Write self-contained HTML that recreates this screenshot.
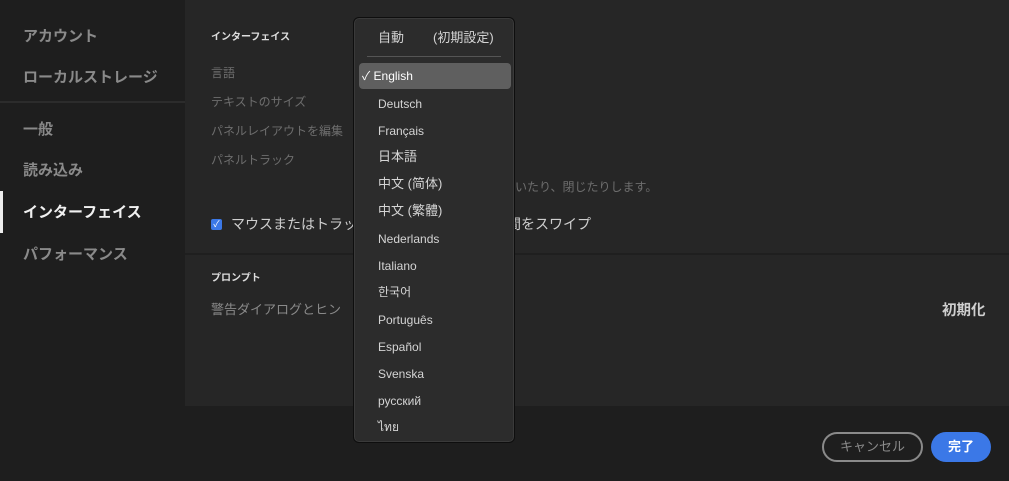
<!DOCTYPE html>
<html><head><meta charset="utf-8"><style>
*{margin:0;padding:0;box-sizing:border-box}
body{width:1009px;height:481px;background:#1e1e1e;font-family:"Liberation Sans","Noto Sans CJK JP",sans-serif;position:relative;overflow:hidden;color:#ccc}
.a{position:absolute;white-space:nowrap;line-height:1.2}
.side{font-size:15px;font-weight:bold;color:#8a8a8a;left:23px}
.panel{position:absolute;left:185px;top:0;width:824px;height:406px;background:#262626}
.lbl{font-size:12px;color:#6e6e6e;left:211px}
.menu{position:absolute;left:353px;top:17px;width:162px;height:426px;background:#2c2c2c;border:1px solid #0e0e0e;border-radius:6px;box-shadow:0 0 0 1px #3a3a3a inset}
.mi{position:absolute;left:24px;font-size:12px;color:#d4d4d4;line-height:16px;white-space:nowrap}
</style></head><body>
<div class="panel"></div>
<div class="a side" style="top:28px">アカウント</div>
<div class="a side" style="top:69px">ローカルストレージ</div>
<div class="a" style="left:0;top:101px;width:185px;height:2px;background:#2c2c2c"></div>
<div class="a side" style="top:121px">一般</div>
<div class="a side" style="top:162px">読み込み</div>
<div class="a side" style="top:204px;color:#f0f0f0">インターフェイス</div>
<div class="a" style="left:0;top:191px;width:3px;height:42px;background:#eee"></div>
<div class="a side" style="top:246px">パフォーマンス</div>

<div class="a" style="left:211px;top:32px;font-size:10px;font-weight:bold;color:#ddd">インターフェイス</div>
<div class="a lbl" style="top:66px">言語</div>
<div class="a lbl" style="top:95px">テキストのサイズ</div>
<div class="a lbl" style="top:124px">パネルレイアウトを編集</div>
<div class="a lbl" style="top:153px">パネルトラック</div>
<div class="a" style="left:515px;top:180px;font-size:12px;color:#6e6e6e">いたり、閉じたりします。</div>
<div class="a" style="left:211px;top:219px;width:11px;height:11px;background:#3b78e7;border-radius:2px;color:#fff;font-size:9px;line-height:11px;text-align:center">✓</div>
<div class="a" style="left:231px;top:216px;font-size:14px;color:#cfcfcf">マウスまたはトラッ</div>
<div class="a" style="left:507px;top:216px;font-size:14px;color:#cfcfcf">間をスワイプ</div>
<div class="a" style="left:185px;top:253px;width:824px;height:2px;background:#1f1f1f"></div>
<div class="a" style="left:211px;top:273px;font-size:10px;font-weight:bold;color:#ddd">プロンプト</div>
<div class="a" style="left:211px;top:302px;font-size:13px;color:#8a8a8a">警告ダイアログとヒン</div>
<div class="a" style="left:942px;top:303px;font-size:14.5px;font-weight:bold;color:#cfcfcf">初期化</div>

<div class="a" style="left:822px;top:432px;width:101px;height:30px;border:2px solid #8a8a8a;border-radius:15px;font-size:13px;color:#8a8a8a;text-align:center;line-height:26px">キャンセル</div>
<div class="a" style="left:931px;top:432px;width:60px;height:30px;background:#3b78e7;border-radius:15px;font-size:13px;color:#fff;text-align:center;line-height:30px;font-weight:bold">完了</div>

<div class="menu">
<div class="mi" style="top:12px;font-size:13px">自動</div>
<div class="mi" style="left:79px;top:12px;font-size:13px">(初期設定)</div>
<div class="a" style="left:13px;top:38px;width:134px;height:1px;background:#555"></div>
<div class="a" style="left:5px;top:45px;width:152px;height:26px;background:#5f5f5f;border-radius:4px"></div>
<div class="mi" style="left:8px;top:50px;color:#fff">✓ English</div>
<div class="mi" style="top:78px">Deutsch</div>
<div class="mi" style="top:105px">Français</div>
<div class="mi" style="top:131px;font-size:13px">日本語</div>
<div class="mi" style="top:158px;font-size:13px">中文 (简体)</div>
<div class="mi" style="top:185px;font-size:13px">中文 (繁體)</div>
<div class="mi" style="top:213px">Nederlands</div>
<div class="mi" style="top:240px">Italiano</div>
<div class="mi" style="top:266px">한국어</div>
<div class="mi" style="top:294px">Português</div>
<div class="mi" style="top:321px">Español</div>
<div class="mi" style="top:348px">Svenska</div>
<div class="mi" style="top:375px">русский</div>
<div class="mi" style="top:401px">ไทย</div>
</div>
</body></html>
